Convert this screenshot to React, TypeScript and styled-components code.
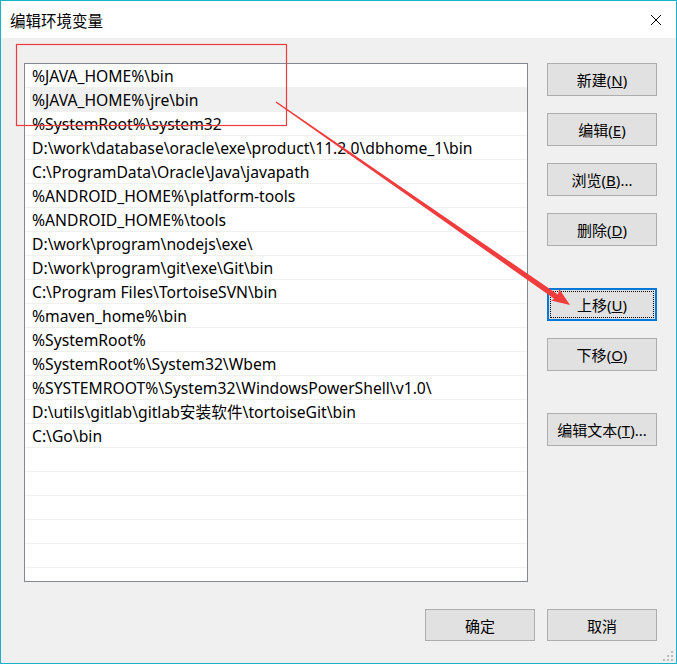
import React from 'react';
import styled, { createGlobalStyle } from 'styled-components';

const GlobalStyle = createGlobalStyle`
  html, body {
    margin: 0;
    padding: 0;
    background: #ffffff;
  }
  body {
    font-family: "Noto Sans", "Noto Sans CJK SC", sans-serif;
    font-size: 15px;
    color: #000000;
  }
`;

const Window = styled.div`
  position: relative;
  box-sizing: border-box;
  width: 677px;
  height: 664px;
  display: flex;
  flex-direction: column;
  border: 1px solid #1ab2c6;
  background: #f0f0f0;
  overflow: hidden;
`;

const TitleBar = styled.div`
  display: flex;
  align-items: center;
  justify-content: space-between;
  height: 37px;
  padding: 0 14px 0 9px;
  background: #ffffff;
`;

const TitleText = styled.div`
  font-size: 15.5px;
  color: #000000;
  margin-top: 1px;
`;

const CloseIcon = styled.svg`
  width: 12px;
  height: 12px;
`;

const Body = styled.div`
  flex: 1;
  display: flex;
  flex-direction: column;
  padding: 25px 19px 0 23px;
`;

const Main = styled.div`
  display: flex;
  gap: 19px;
`;

const ListBox = styled.div`
  box-sizing: border-box;
  width: 504px;
  height: 519px;
  border: 1px solid #828790;
  background: #ffffff;
  overflow: hidden;
`;

const Row = styled.div<{ $selected?: boolean }>`
  box-sizing: border-box;
  height: 24px;
  margin-left: ${(p) => (p.$selected ? '5px' : '0')};
  padding-left: ${(p) => (p.$selected ? '2px' : '7px')};
  box-shadow: inset 0 -1px 0 #f0f0f0;
  background: ${(p) => (p.$selected ? '#f0f0f0' : '#ffffff')};
  line-height: 25px;
  white-space: nowrap;
  overflow: hidden;
  font-size: 15.7px;
  color: #000000;
`;

const ButtonColumn = styled.div`
  display: flex;
  flex-direction: column;
  width: 110px;
`;

const Button = styled.button<{ $gap?: number; $focused?: boolean }>`
  position: relative;
  box-sizing: border-box;
  width: 110px;
  height: 33px;
  margin: ${(p) => p.$gap ?? 0}px 0 0 0;
  padding: 0;
  border: 1px solid ${(p) => (p.$focused ? '#0078d7' : '#adadad')};
  box-shadow: ${(p) => (p.$focused ? 'inset 0 0 0 1px #0078d7' : 'none')};
  background: #e1e1e1;
  font-family: "Noto Sans", "Noto Sans CJK SC", sans-serif;
  font-size: 15px;
  color: #000000;
  cursor: default;

  &::after {
    content: '';
    display: ${(p) => (p.$focused ? 'block' : 'none')};
    position: absolute;
    inset: 2px;
    border: 1px dotted #000000;
  }
`;

const Footer = styled.div`
  display: flex;
  justify-content: flex-end;
  gap: 12px;
  margin-top: 27px;
`;

const FooterButton = styled(Button)`
  height: 32px;
`;

const Overlay = styled.svg`
  position: absolute;
  left: -1px;
  top: -1px;
  width: 677px;
  height: 664px;
  pointer-events: none;
`;

const Grip = styled.svg`
  position: absolute;
  right: 2px;
  bottom: 1px;
  width: 12px;
  height: 12px;
`;

const paths = [
  '%JAVA_HOME%\\bin',
  '%JAVA_HOME%\\jre\\bin',
  '%SystemRoot%\\system32',
  'D:\\work\\database\\oracle\\exe\\product\\11.2.0\\dbhome_1\\bin',
  'C:\\ProgramData\\Oracle\\Java\\javapath',
  '%ANDROID_HOME%\\platform-tools',
  '%ANDROID_HOME%\\tools',
  'D:\\work\\program\\nodejs\\exe\\',
  'D:\\work\\program\\git\\exe\\Git\\bin',
  'C:\\Program Files\\TortoiseSVN\\bin',
  '%maven_home%\\bin',
  '%SystemRoot%',
  '%SystemRoot%\\System32\\Wbem',
  '%SYSTEMROOT%\\System32\\WindowsPowerShell\\v1.0\\',
  'D:\\utils\\gitlab\\gitlab安装软件\\tortoiseGit\\bin',
  'C:\\Go\\bin',
];

const sideButtons = [
  { label: '新建', key: 'N', gap: 0 },
  { label: '编辑', key: 'E', gap: 17 },
  { label: '浏览', key: 'B', gap: 17, more: true },
  { label: '删除', key: 'D', gap: 17 },
  { label: '上移', key: 'U', gap: 42, focused: true },
  { label: '下移', key: 'O', gap: 17 },
  { label: '编辑文本', key: 'T', gap: 42, more: true },
];

function App() {
  const rows = [...paths, ...Array(6).fill('')];

  return (
    <>
      <GlobalStyle />
      <Window>
        <TitleBar>
          <TitleText>编辑环境变量</TitleText>
          <CloseIcon viewBox="0 0 12 12">
            <path d="M1 1 L11 11 M11 1 L1 11" stroke="#000" strokeWidth="1" fill="none" />
          </CloseIcon>
        </TitleBar>
        <Body>
          <Main>
            <ListBox>
              {rows.map((p, i) => (
                <Row key={i} $selected={i === 1}>
                  {p}
                </Row>
              ))}
            </ListBox>
            <ButtonColumn>
              {sideButtons.map((b) => (
                <Button key={b.key} $gap={b.gap} $focused={b.focused}>
                  {b.label}(<u>{b.key}</u>){b.more ? '...' : ''}
                </Button>
              ))}
            </ButtonColumn>
          </Main>
          <Footer>
            <FooterButton>确定</FooterButton>
            <FooterButton>取消</FooterButton>
          </Footer>
        </Body>

        <Overlay viewBox="0 0 677 664">
          <rect x="16.5" y="44.5" width="270" height="81" fill="none" stroke="#f03c3c" strokeWidth="1.2" />
          <polygon points="275.6,102.4 276.4,101.6 560,296 556,300" fill="#f03c3c" />
          <polygon points="570,305 559.2,289 557.5,297 551.2,300.6" fill="#f03c3c" />
        </Overlay>

        <Grip viewBox="0 0 12 12">
          <rect x="9" y="1" width="2" height="2" fill="#bcbcbc" />
          <rect x="5" y="5" width="2" height="2" fill="#bcbcbc" />
          <rect x="9" y="5" width="2" height="2" fill="#bcbcbc" />
          <rect x="1" y="9" width="2" height="2" fill="#bcbcbc" />
          <rect x="5" y="9" width="2" height="2" fill="#bcbcbc" />
          <rect x="9" y="9" width="2" height="2" fill="#bcbcbc" />
        </Grip>
      </Window>
    </>
  );
}

export default App;
